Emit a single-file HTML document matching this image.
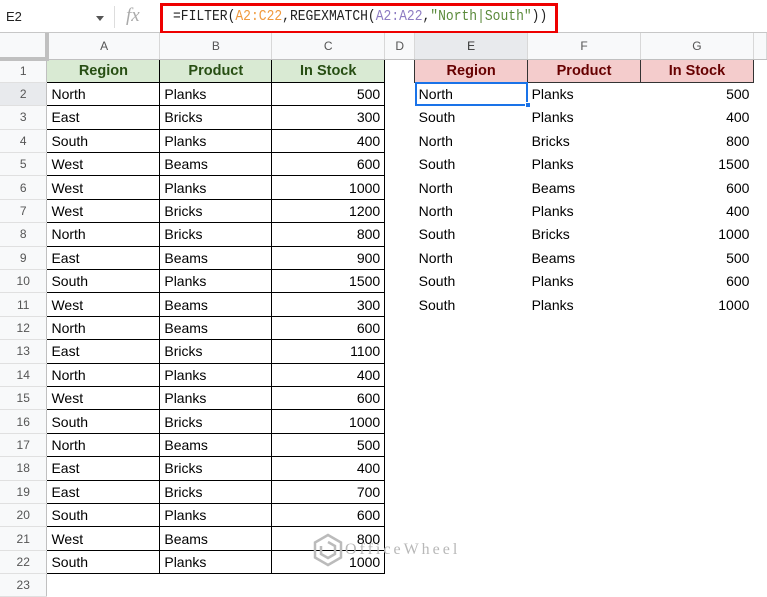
<!DOCTYPE html>
<html><head><meta charset="utf-8"><style>
*{margin:0;padding:0;box-sizing:border-box}
body{width:767px;height:589px;overflow:hidden;background:#fff;font-family:"Liberation Sans",Arial,sans-serif;font-size:14px;color:#000;position:relative}
#fb{position:absolute;left:0;top:0;width:767px;height:33px;background:#fff;border-bottom:1px solid #c7c7c7}
#nm{position:absolute;left:6px;top:9px;font-size:13px;color:#222}
#dd{position:absolute;left:96px;top:16px;width:0;height:0;border-left:4px solid transparent;border-right:4px solid transparent;border-top:5px solid #555}
#sep{position:absolute;left:114px;top:6px;width:1px;height:22px;background:#ddd}
#fx{position:absolute;left:126px;top:5px;font-family:"Liberation Serif",serif;font-style:italic;font-size:19px;color:#aaa}
#red{position:absolute;left:160px;top:3px;width:398px;height:31px;border:3px solid #e00}
#fml{position:absolute;left:173px;top:9px;font-family:"Liberation Mono",monospace;font-size:14.8px;color:#222;transform:scaleX(0.878);transform-origin:0 0;white-space:nowrap}
.o{color:#f09a3e}.p{color:#8e7cc3}.g{color:#5a8a3a}
table{position:absolute;left:0;top:33px;border-collapse:collapse;table-layout:fixed}
td{height:23.4px;padding:0 4px;white-space:nowrap;overflow:hidden;border:0}
tr.h td{height:26px;background:#f8f9fa;color:#555;font-size:12px;text-align:center;border-right:1px solid #d8d8d8;border-bottom:1px solid #c0c0c0}
td.r{background:#f8f9fa;color:#555;font-size:12px;text-align:center;border-right:1px solid #c0c0c0;border-bottom:1px solid #e0e0e0}
td.b{border:1px solid #000}
td.n{text-align:right}
td.gh{background:#d9ead3;color:#274e13;font-weight:bold;text-align:center;font-size:14.5px}
td.ph{background:#f4cccc;color:#660000;font-weight:bold;text-align:center;font-size:14.5px;border:1px solid #333}
td.sel{outline:2px solid #1a73e8;outline-offset:-2px}
#h{position:absolute;left:525px;top:102px;width:6px;height:6px;background:#1a73e8;border:1px solid #fff}
#wm{position:absolute;left:345px;top:541px;font-family:"Liberation Serif",serif;font-size:16px;letter-spacing:3px;color:#b8b8b8}
#logo{position:absolute;left:312px;top:533px}
</style></head><body>
<div id="fb"><span id="nm">E2</span><div id="dd"></div><div id="sep"></div><span id="fx">fx</span>
<div id="red"></div>
<div id="fml">=FILTER(<span class="o">A2:C22</span>,REGEXMATCH(<span class="p">A2:A22</span>,<span class="g">"North|South"</span>))</div></div>
<table>
<colgroup><col style="width:47px"><col style="width:113px"><col style="width:112px"><col style="width:113px"><col style="width:30px"><col style="width:113px"><col style="width:113px"><col style="width:113px"><col style="width:13px"></colgroup>
<tr class="h"><td style="border-right:4px solid #c0c0c0;border-bottom:4px solid #c0c0c0"></td><td>A</td><td>B</td><td>C</td><td>D</td><td style="background:#e8eaed;color:#333">E</td><td>F</td><td>G</td><td></td></tr>
<tr><td class="r">1</td><td class="b gh">Region</td><td class="b gh">Product</td><td class="b gh">In Stock</td><td></td><td class="ph">Region</td><td class="ph">Product</td><td class="ph">In Stock</td><td></td></tr>
<tr><td class="r" style="background:#e8eaed">2</td><td class="b">North</td><td class="b">Planks</td><td class="b n">500</td><td></td><td class="sel">North</td><td>Planks</td><td class="n">500</td><td></td></tr>
<tr><td class="r">3</td><td class="b">East</td><td class="b">Bricks</td><td class="b n">300</td><td></td><td>South</td><td>Planks</td><td class="n">400</td><td></td></tr>
<tr><td class="r">4</td><td class="b">South</td><td class="b">Planks</td><td class="b n">400</td><td></td><td>North</td><td>Bricks</td><td class="n">800</td><td></td></tr>
<tr><td class="r">5</td><td class="b">West</td><td class="b">Beams</td><td class="b n">600</td><td></td><td>South</td><td>Planks</td><td class="n">1500</td><td></td></tr>
<tr><td class="r">6</td><td class="b">West</td><td class="b">Planks</td><td class="b n">1000</td><td></td><td>North</td><td>Beams</td><td class="n">600</td><td></td></tr>
<tr><td class="r">7</td><td class="b">West</td><td class="b">Bricks</td><td class="b n">1200</td><td></td><td>North</td><td>Planks</td><td class="n">400</td><td></td></tr>
<tr><td class="r">8</td><td class="b">North</td><td class="b">Bricks</td><td class="b n">800</td><td></td><td>South</td><td>Bricks</td><td class="n">1000</td><td></td></tr>
<tr><td class="r">9</td><td class="b">East</td><td class="b">Beams</td><td class="b n">900</td><td></td><td>North</td><td>Beams</td><td class="n">500</td><td></td></tr>
<tr><td class="r">10</td><td class="b">South</td><td class="b">Planks</td><td class="b n">1500</td><td></td><td>South</td><td>Planks</td><td class="n">600</td><td></td></tr>
<tr><td class="r">11</td><td class="b">West</td><td class="b">Beams</td><td class="b n">300</td><td></td><td>South</td><td>Planks</td><td class="n">1000</td><td></td></tr>
<tr><td class="r">12</td><td class="b">North</td><td class="b">Beams</td><td class="b n">600</td><td colspan="5"></td></tr>
<tr><td class="r">13</td><td class="b">East</td><td class="b">Bricks</td><td class="b n">1100</td><td colspan="5"></td></tr>
<tr><td class="r">14</td><td class="b">North</td><td class="b">Planks</td><td class="b n">400</td><td colspan="5"></td></tr>
<tr><td class="r">15</td><td class="b">West</td><td class="b">Planks</td><td class="b n">600</td><td colspan="5"></td></tr>
<tr><td class="r">16</td><td class="b">South</td><td class="b">Bricks</td><td class="b n">1000</td><td colspan="5"></td></tr>
<tr><td class="r">17</td><td class="b">North</td><td class="b">Beams</td><td class="b n">500</td><td colspan="5"></td></tr>
<tr><td class="r">18</td><td class="b">East</td><td class="b">Bricks</td><td class="b n">400</td><td colspan="5"></td></tr>
<tr><td class="r">19</td><td class="b">East</td><td class="b">Bricks</td><td class="b n">700</td><td colspan="5"></td></tr>
<tr><td class="r">20</td><td class="b">South</td><td class="b">Planks</td><td class="b n">600</td><td colspan="5"></td></tr>
<tr><td class="r">21</td><td class="b">West</td><td class="b">Beams</td><td class="b n">800</td><td colspan="5"></td></tr>
<tr><td class="r">22</td><td class="b">South</td><td class="b">Planks</td><td class="b n">1000</td><td colspan="5"></td></tr>
<tr><td class="r">23</td><td colspan="8"></td></tr>
</table>
<div id="h"></div>
<svg id="logo" width="32" height="34" viewBox="0 0 32 34"><g fill="none" stroke="#bbb" stroke-width="2.5"><path d="M16 2 L29 9.5 V24.5 L16 32 L3 24.5 V9.5 Z"/><path d="M16 9 L23 13 V21 L16 25 L9 21 V13"/></g></svg>
<div id="wm">OfficeWheel</div>
</body></html>
